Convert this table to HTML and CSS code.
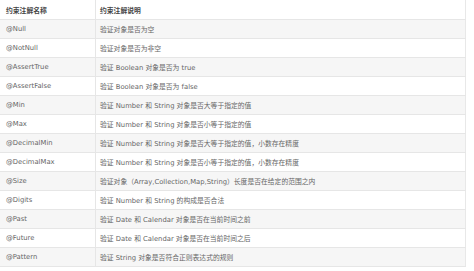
FILE: index.html
```html
<!DOCTYPE html>
<html lang="zh-CN">
<head>
    <meta charset="UTF-8">
    <title>约束注解</title>
    <link rel="stylesheet" href="styles.css">
</head>
<body>
    <table class="rules">
        <thead>
            <tr><th>约束注解名称</th><th>约束注解说明</th></tr>
        </thead>
        <tbody>
            <tr><td>@Null</td><td>验证对象是否为空</td></tr>
            <tr><td>@NotNull</td><td>验证对象是否为非空</td></tr>
            <tr><td>@AssertTrue</td><td>验证 Boolean 对象是否为 true</td></tr>
            <tr><td>@AssertFalse</td><td>验证 Boolean 对象是否为 false</td></tr>
            <tr><td>@Min</td><td>验证 Number 和 String 对象是否大等于指定的值</td></tr>
            <tr><td>@Max</td><td>验证 Number 和 String 对象是否小等于指定的值</td></tr>
            <tr><td>@DecimalMin</td><td>验证 Number 和 String 对象是否大等于指定的值，小数存在精度</td></tr>
            <tr><td>@DecimalMax</td><td>验证 Number 和 String 对象是否小等于指定的值，小数存在精度</td></tr>
            <tr><td>@Size</td><td>验证对象（Array,Collection,Map,String）长度是否在给定的范围之内</td></tr>
            <tr><td>@Digits</td><td>验证 Number 和 String 的构成是否合法</td></tr>
            <tr><td>@Past</td><td>验证 Date 和 Calendar 对象是否在当前时间之前</td></tr>
            <tr><td>@Future</td><td>验证 Date 和 Calendar 对象是否在当前时间之后</td></tr>
            <tr><td>@Pattern</td><td>验证 String 对象是否符合正则表达式的规则</td></tr>
        </tbody>
    </table>
</body>
</html>
```
FILE: styles.css
```css
body {
    margin: 0;
    padding: 0;
    background: #fff;
    font-family: "DejaVu Sans", "Noto Sans CJK SC", sans-serif;
    font-size: 6.8px;
    color: #666;
}
.rules {
    width: 466px;
    border-collapse: collapse;
    border-right: 1px solid #e8e8e8;
}
.rules th,
.rules td {
    height: 18px;
    padding: 0 6px;
    text-align: left;
    border-bottom: 1px solid #e6e6e6;
    white-space: nowrap;
}
.rules th {
    height: 19px;
    font-weight: bold;
    color: #444;
}
.rules th:first-child,
.rules td:first-child {
    width: 83px;
    border-right: 1px solid #e6e6e6;
}
.rules td:last-child,
.rules th:last-child {
    padding-left: 4px;
}
.rules tbody tr:nth-child(odd) {
    background: #f6f6f6;
}
```
